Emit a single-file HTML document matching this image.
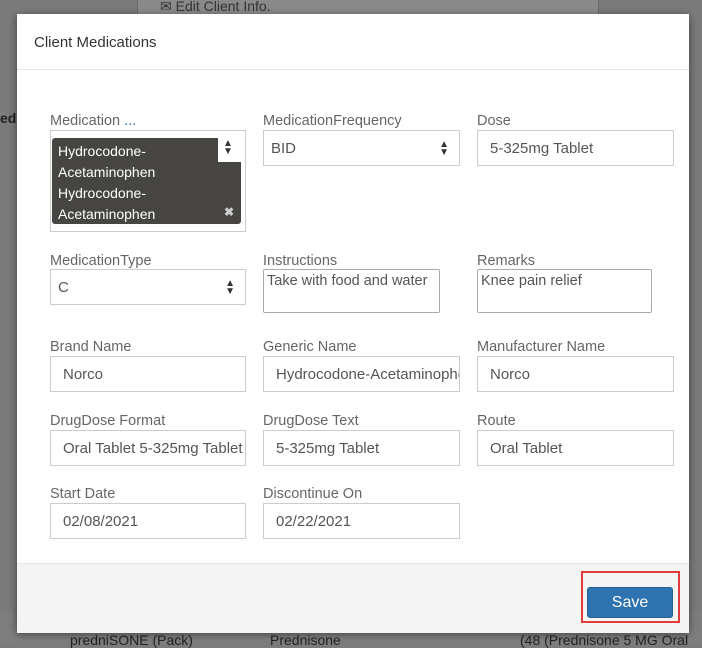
<!DOCTYPE html>
<html><head><style>
body{margin:0;width:702px;height:645px;background:#7b7b7b;font-family:"Liberation Sans",sans-serif;position:relative;overflow:hidden}
.a{position:absolute}
.m{left:17px;top:14px;width:672px;height:618px;background:#fff;box-shadow:0 2px 8px rgba(0,0,0,.5)}
.lb{position:absolute;font-size:14.5px;color:#666;margin-top:2px;z-index:2}
.in{position:absolute;box-sizing:border-box;border:1px solid #ccc;background:#fff;font-size:15px;color:#555;padding:0 12px;line-height:36px;height:36px;white-space:nowrap;overflow:hidden}
.ta{position:absolute;box-sizing:border-box;border:1px solid #aaa;border-radius:2px;background:#fff;font-size:14.5px;color:#555;padding:3px 3px;height:44px;white-space:nowrap;overflow:hidden}
.ar{position:absolute;right:10px;top:10px;font-size:10px;line-height:8px;color:#333}
</style></head><body>
<div class="a" style="left:137px;top:0;width:460px;height:14px;background:#8a8a8a;border:1px solid #6a6a6a;border-top:none"></div>
<div class="a" style="left:160px;top:-2px;font-size:14px;color:#333">✉ Edit Client Info.</div>
<div class="a" style="left:0;top:110px;font-size:14px;font-weight:bold;color:#222">edi</div>
<div class="a" style="left:0;top:610px;width:702px;height:35px;background:#7e7e7e"></div>
<div class="a" style="left:70px;top:632px;font-size:14px;color:#222">predniSONE (Pack)</div>
<div class="a" style="left:270px;top:632px;font-size:14px;color:#222">Prednisone</div>
<div class="a" style="left:520px;top:632px;font-size:14px;color:#222">(48 (Prednisone 5 MG Oral</div>
<div class="a m">
 <div class="a" style="left:17px;top:20px;font-size:15px;color:#333">Client Medications</div>
 <div class="a" style="left:0;top:55px;width:672px;height:1px;background:#e5e5e5"></div>
 <div class="a" style="left:0;top:549px;width:672px;height:69px;background:#f4f4f4;border-top:1px solid #e5e5e5"></div>
 <div class="a" style="left:564px;top:557px;width:99px;height:52px;border:2px solid #e03a3a;box-sizing:border-box"></div>
 <div class="a" style="left:570px;top:573px;width:86px;height:31px;background:#2f72b0;border:1px solid #285f94;border-radius:3px;box-sizing:border-box;color:#fff;font-size:16px;text-align:center;line-height:29px">Save</div>
</div>
<div class="lb" style="left:50px;top:111px">Medication <span style="color:#2f72b0">...</span></div>
<div class="a" style="left:50px;top:130px;width:196px;height:102px;border:1px solid #ccc;box-sizing:border-box"></div>
<div class="a" style="left:52px;top:138px;width:166px;height:26px;background:#474542;border-radius:3px 0 0 0"></div>
<div class="a" style="left:52px;top:162px;width:189px;height:62px;background:#474542;border-radius:0 0 3px 3px"></div>
<div class="a" style="left:58px;top:141px;color:#fff;font-size:14px;line-height:21px">Hydrocodone-<br>Acetaminophen<br>Hydrocodone-<br>Acetaminophen</div>
<div class="a" style="left:223px;top:140px;font-size:10px;line-height:8px;color:#333">▲<br>▼</div>
<div class="a" style="left:224px;top:205px;color:#ccc;font-size:12px;font-weight:bold">✖</div>
<div class="lb" style="left:263px;top:111px">MedicationFrequency</div>
<div class="in" style="left:263px;top:130px;width:197px;padding-left:7px">BID<div class="ar">▲<br>▼</div></div>
<div class="lb" style="left:477px;top:111px">Dose</div>
<div class="in" style="left:477px;top:130px;width:197px">5-325mg Tablet</div>
<div class="lb" style="left:50px;top:251px">MedicationType</div>
<div class="in" style="left:50px;top:269px;width:196px;padding-left:7px">C<div class="ar">▲<br>▼</div></div>
<div class="lb" style="left:263px;top:251px">Instructions</div>
<div class="ta" style="left:263px;top:269px;width:177px">Take with food and water</div>
<div class="lb" style="left:477px;top:251px">Remarks</div>
<div class="ta" style="left:477px;top:269px;width:175px">Knee pain relief</div>
<div class="lb" style="left:50px;top:337px">Brand Name</div>
<div class="in" style="left:50px;top:356px;width:196px">Norco</div>
<div class="lb" style="left:263px;top:337px">Generic Name</div>
<div class="in" style="left:263px;top:356px;width:197px">Hydrocodone-Acetaminophen</div>
<div class="lb" style="left:477px;top:337px">Manufacturer Name</div>
<div class="in" style="left:477px;top:356px;width:197px">Norco</div>
<div class="lb" style="left:50px;top:411px">DrugDose Format</div>
<div class="in" style="left:50px;top:430px;width:196px">Oral Tablet 5-325mg Tablet</div>
<div class="lb" style="left:263px;top:411px">DrugDose Text</div>
<div class="in" style="left:263px;top:430px;width:197px">5-325mg Tablet</div>
<div class="lb" style="left:477px;top:411px">Route</div>
<div class="in" style="left:477px;top:430px;width:197px">Oral Tablet</div>
<div class="lb" style="left:50px;top:484px">Start Date</div>
<div class="in" style="left:50px;top:503px;width:196px">02/08/2021</div>
<div class="lb" style="left:263px;top:484px">Discontinue On</div>
<div class="in" style="left:263px;top:503px;width:197px">02/22/2021</div>
</body></html>
